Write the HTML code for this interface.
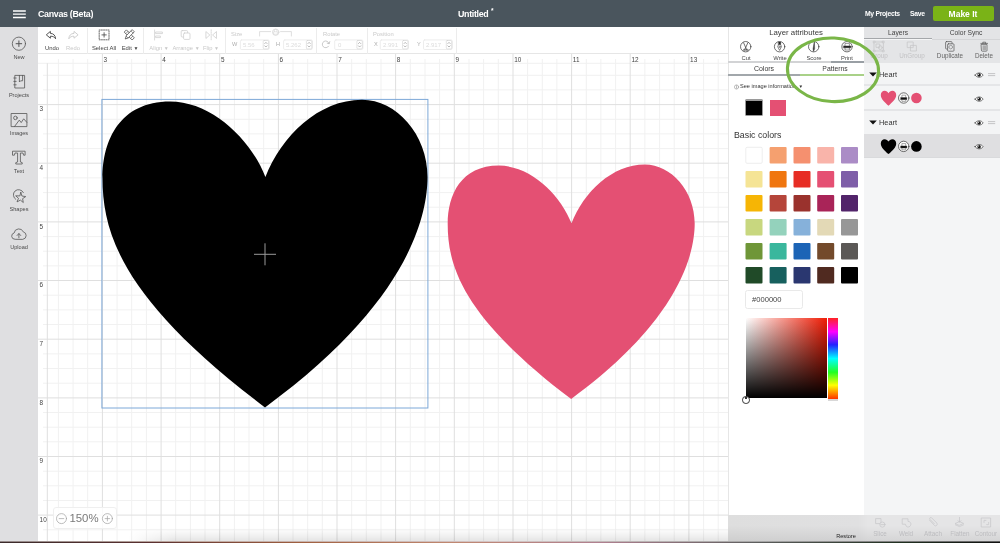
<!DOCTYPE html>
<html>
<head>
<meta charset="utf-8">
<title>Canvas</title>
<style>
*{box-sizing:border-box;margin:0;padding:0}
html,body{width:1000px;height:543px;overflow:hidden;background:#fff;font-family:"Liberation Sans",sans-serif;}
#app{position:relative;width:1000px;height:543px;overflow:hidden;background:#fff}
.abs{position:absolute}
.t{will-change:transform;position:absolute;white-space:nowrap;line-height:1;transform:translate(-50%,-50%)}
.tl{will-change:transform;position:absolute;white-space:nowrap;line-height:1;transform:translate(0,-50%)}
#header{position:absolute;left:0;top:0;width:1000px;height:27px;background:#4a555d}
#sidebar{position:absolute;left:0;top:27px;width:38px;height:514px;background:#dfdfe1}
#toolbar{position:absolute;left:38px;top:27px;width:690px;height:27px;background:#fff;border-bottom:1px solid #e6e6e6}
#canvas{position:absolute;left:38px;top:54px;width:690px;height:487px;background:#fff}
#attr{position:absolute;left:728px;top:27px;width:136px;height:488px;background:#fff}
#layers{position:absolute;left:864px;top:27px;width:136px;height:488px;background:#f4f5f6}
#bottombar{position:absolute;left:728px;top:515px;width:272px;height:26px;background:linear-gradient(to bottom,rgba(0,0,0,0) 40%,rgba(0,0,0,0.07) 100%),linear-gradient(to right,#dedede 0,#e0e0e1 130px,#e5e5e6 140px)}
#strip{position:absolute;left:0;top:542px;width:1000px;height:1px;background:linear-gradient(90deg,#3a2a2a 0%,#5a3030 15%,#a06040 30%,#c08870 45%,#b08090 60%,#606060 75%,#203020 90%,#101010 100%)}
.sb{color:#4a4a4a;font-size:5.6px}
.tb{color:#444;font-size:5.9px}
.tbd{color:#c8c8c8;font-size:5.8px}
.rl{position:absolute;font-size:6.3px;color:#444;line-height:1}
</style>
</head>
<body>
<div id="app">

<!-- HEADER -->
<div id="header">
  <svg class="abs" style="left:0;top:0" width="38" height="27" viewBox="0 0 38 27"><path d="M13 10.9H25.8M13 14.1H25.8M13 17.4H25.8" stroke="#fff" stroke-width="1.45" fill="none"/></svg>
  <div class="tl" style="left:38.4px;top:13.8px;color:#fff;font-weight:bold;font-size:8.9px;letter-spacing:-0.32px">Canvas (Beta)</div>
  <div class="tl" style="left:458.4px;top:13.6px;color:#fff;font-weight:bold;font-size:8.9px;letter-spacing:-0.32px">Untitled</div>
  <div class="tl" style="left:490.8px;top:10.6px;color:#fff;font-weight:bold;font-size:6.5px">*</div>
  <div class="tl" style="left:864.5px;top:13.8px;color:#fff;font-weight:bold;font-size:6.8px;letter-spacing:-0.3px">My Projects</div>
  <div class="tl" style="left:910px;top:13.8px;color:#fff;font-weight:bold;font-size:6.8px;letter-spacing:-0.3px">Save</div>
  <div class="abs" style="left:932.5px;top:6.3px;width:61.5px;height:14.4px;background:#7ab317;border-radius:2px"></div>
  <div class="t" style="left:962.5px;top:13.6px;color:#fff;font-weight:bold;font-size:8.5px">Make It</div>
</div>

<!-- SIDEBAR -->
<div id="sidebar">
  <svg class="abs" style="left:0;top:0" width="38" height="300" viewBox="0 27 38 300" fill="none" stroke="#555" stroke-width="0.8" stroke-linecap="round" stroke-linejoin="round">
    <!-- New -->
    <circle cx="18.9" cy="43.7" r="6.6"/>
    <path d="M16.1 43.7H21.7M18.9 40.9V46.5" stroke-width="1"/>
    <!-- Projects -->
    <path d="M15.2 75.4H24.6V88H15.2Z"/>
    <path d="M19.4 75.4V82L20.6 80.8H22.6V75.4" />
    <path d="M13.8 78H16.2M13.8 81.4H16.2M13.8 84.8H16.2"/>
    <!-- Images -->
    <rect x="11.5" y="113.5" width="15.4" height="13.1"/>
    <circle cx="15.4" cy="117.9" r="1.8"/>
    <path d="M14.6 126.4L19.3 120.1L21.2 122.6L23.7 118.8L26.8 122.3"/>
    <!-- Text -->
    <path d="M12.9 151.2H25.1V155.2H23.6L23 153H20.4V162L22.2 162.6V164H15.8V162.6L17.6 162V153H15L14.4 155.2H12.9Z"/>
    <!-- Shapes -->
    <path d="M15.8 199.4A5.3 5.3 0 1 1 23.4 192.6"/>
    <path d="M20.9 192.4L21.9 196L25.7 196.6L22.6 198.7L23.3 202.5L20.4 200.1L17 201.9L18.5 198.3L15.7 195.8L19.5 195.9Z"/>
    <!-- Upload -->
    <path d="M14.8 239.3A3.2 3.2 0 0 1 14.1 233A4.8 4.8 0 0 1 23.3 231.9A3.8 3.8 0 0 1 23.1 239.3Z"/>
    <path d="M18.9 237.8V233.8M17.1 235.5L18.9 233.5L20.7 235.5"/>
  </svg>
  <div class="t sb" style="left:18.8px;top:30.5px">New</div>
  <div class="t sb" style="left:18.8px;top:68.8px">Projects</div>
  <div class="t sb" style="left:18.8px;top:106.8px">Images</div>
  <div class="t sb" style="left:18.8px;top:144.8px">Text</div>
  <div class="t sb" style="left:18.8px;top:182.8px">Shapes</div>
  <div class="t sb" style="left:18.8px;top:220.8px">Upload</div>
</div>

<!-- TOOLBAR -->
<div id="toolbar">
  <!-- coords inside toolbar: x-38, y-27 -->
  <svg class="abs" style="left:0;top:0" width="690" height="27" viewBox="38 27 690 27" fill="none" stroke-linecap="round" stroke-linejoin="round">
    <g stroke="#ececec" stroke-width="1" shape-rendering="crispEdges">
      <path d="M87.5 28V54M143.5 28V54M225.5 28V54M316.5 28V54M367.5 28V54M456.5 28V54"/>
    </g>
    <!-- undo -->
    <g stroke="#444" stroke-width="0.9">
      <path d="M46.6 34.6L50.4 31.4V33.4C53.6 33.4 55.4 35.6 55.6 38.8C54.4 37 53 36.2 50.4 36.2V37.8Z"/>
    </g>
    <!-- redo -->
    <g stroke="#c9c9c9" stroke-width="0.9">
      <path d="M77.8 34.6L74 31.4V33.4C70.8 33.4 69 35.6 68.8 38.8C70 37 71.4 36.2 74 36.2V37.8Z"/>
    </g>
    <!-- select all -->
    <g stroke="#444" stroke-width="0.8">
      <rect x="99.2" y="30" width="9.8" height="9.8" stroke-dasharray="1 1.18"/>
      <path d="M101.9 34.9H106.3M104.1 32.7V37.1"/>
    </g>
    <!-- edit -->
    <g stroke="#444" stroke-width="0.7" transform="translate(129.4 34.8)">
      <g transform="rotate(-45)"><rect x="-1.35" y="-5.6" width="2.7" height="11.2" fill="#fff"/><path d="M-1.35 -3.4H1.35M-1.35 3.4H1.35" stroke-width="0.5"/></g>
      <g transform="rotate(45)"><path d="M-1.35 -5.6H1.35V3.2L0 5.9L-1.35 3.2Z" fill="#fff"/><path d="M-1.35 -3.8H1.35M-1.35 3.2H1.35" stroke-width="0.5"/></g>
    </g>
    <!-- align -->
    <g stroke="#cfcfcf" stroke-width="0.8">
      <path d="M154.6 30V40M156 32H162.4V33.6H156ZM156 36H160.4V37.6H156Z"/>
    </g>
    <!-- arrange -->
    <g stroke="#cfcfcf" stroke-width="0.8">
      <rect x="181.2" y="30.6" width="6.4" height="6.4" rx="1"/>
      <rect x="183.6" y="33" width="6.4" height="6.4" rx="1" fill="#fff"/>
    </g>
    <!-- flip -->
    <g stroke="#cfcfcf" stroke-width="0.8">
      <path d="M211.2 29.8V40.2" stroke-dasharray="1.2 1"/>
      <path d="M206.2 31.8L209.8 35L206.2 38.2ZM216.2 31.8L212.6 35L216.2 38.2Z"/>
    </g>
    <!-- size lock bracket -->
    <g stroke="#d6d6d6" stroke-width="0.8">
      <path d="M259.6 36V31.6H270.6M280.6 31.6H291.4V36"/>
      <circle cx="275.7" cy="32.2" r="3.2"/>
      <path d="M274.5 31.6V30.6A1.2 1.2 0 0 1 276.9 30.6V31.6M274 31.8H277.4V34.2H274Z" stroke-width="0.6"/>
    </g>
    <!-- inputs -->
    <g stroke="#e8e8e8" stroke-width="0.8">
      <rect x="240.4" y="39.9" width="28.8" height="9.6" rx="1.2"/>
      <rect x="283.6" y="39.9" width="28.8" height="9.6" rx="1.2"/>
      <rect x="334.7" y="39.9" width="28.2" height="9.6" rx="1.2"/>
      <rect x="380.3" y="39.9" width="28.2" height="9.6" rx="1.2"/>
      <rect x="423.5" y="39.9" width="28.8" height="9.6" rx="1.2"/>
    </g>
    <g stroke="#d2d2d2" stroke-width="0.6">
      <rect x="263.2" y="40.5" width="5.4" height="8.4" rx="1"/>
      <rect x="306.4" y="40.5" width="5.4" height="8.4" rx="1"/>
      <rect x="356.9" y="40.5" width="5.4" height="8.4" rx="1"/>
      <rect x="402.5" y="40.5" width="5.4" height="8.4" rx="1"/>
      <rect x="446.3" y="40.5" width="5.4" height="8.4" rx="1"/>
    </g>
    <g stroke="#8a8a8a" stroke-width="0.6">
      <path d="M264.7 43.6L265.9 42.4L267.1 43.6M264.7 45.8L265.9 47L267.1 45.8"/>
      <path d="M307.9 43.6L309.1 42.4L310.3 43.6M307.9 45.8L309.1 47L310.3 45.8"/>
      <path d="M358.4 43.6L359.6 42.4L360.8 43.6M358.4 45.8L359.6 47L360.8 45.8"/>
      <path d="M404 43.6L405.2 42.4L406.4 43.6M404 45.8L405.2 47L406.4 45.8"/>
      <path d="M447.8 43.6L449 42.4L450.2 43.6M447.8 45.8L449 47L450.2 45.8"/>
    </g>
    <!-- rotate icon -->
    <g stroke="#a8a8a8" stroke-width="0.6">
      <path d="M328.6 46.2A3.4 3.4 0 1 1 329 43.4"/>
      <path d="M329.8 41.6L329.2 43.8L327.2 43.2" />
    </g>
  </svg>
  <div class="t tb" style="left:13.8px;top:21.5px">Undo</div>
  <div class="t tbd" style="left:35px;top:21.5px">Redo</div>
  <div class="t tb" style="left:66px;top:21.5px">Select All</div>
  <div class="t tb" style="left:91.8px;top:21.5px">Edit <span style="font-size:5px">&#9660;</span></div>
  <div class="t tbd" style="left:120.6px;top:21.5px">Align <span style="font-size:5px">&#9660;</span></div>
  <div class="t tbd" style="left:147.5px;top:21.5px">Arrange <span style="font-size:5px">&#9660;</span></div>
  <div class="t tbd" style="left:173.4px;top:21.5px">Flip <span style="font-size:5px">&#9660;</span></div>
  <div class="tl tbd" style="left:192.8px;top:7.9px;color:#cacaca">Size</div>
  <div class="tl tbd" style="left:194px;top:18.3px;color:#adadad;font-size:5.6px">W</div>
  <div class="tl tbd" style="left:238px;top:18.3px;color:#adadad;font-size:5.6px">H</div>
  <div class="tl tbd" style="left:205px;top:18.3px;color:#dcdcdc;font-size:6px">5.56</div>
  <div class="tl tbd" style="left:248px;top:18.3px;color:#dcdcdc;font-size:6px">5.262</div>
  <div class="tl tbd" style="left:284.5px;top:7.9px;color:#cacaca">Rotate</div>
  <div class="tl tbd" style="left:300px;top:18.3px;color:#dcdcdc;font-size:6px">0</div>
  <div class="tl tbd" style="left:335px;top:7.9px;color:#cacaca">Position</div>
  <div class="tl tbd" style="left:336.4px;top:18.3px;color:#adadad;font-size:5.6px">X</div>
  <div class="tl tbd" style="left:345px;top:18.3px;color:#dcdcdc;font-size:6px">2.991</div>
  <div class="tl tbd" style="left:379px;top:18.3px;color:#adadad;font-size:5.6px">Y</div>
  <div class="tl tbd" style="left:388.4px;top:18.3px;color:#dcdcdc;font-size:6px">2.917</div>
</div>

<!-- CANVAS -->
<div id="canvas"></div>
<!--CANVAS-SVG-START-->
<svg class="abs" style="left:0;top:0" width="1000" height="543" viewBox="0 0 1000 543">
<defs><clipPath id="cc"><rect x="38" y="54" width="690" height="487"/></clipPath></defs>
<g clip-path="url(#cc)">
<path d="M58.4 59.0V541.0M73.1 59.0V541.0M87.7 59.0V541.0M117.1 59.0V541.0M131.7 59.0V541.0M146.4 59.0V541.0M175.7 59.0V541.0M190.4 59.0V541.0M205.0 59.0V541.0M234.4 59.0V541.0M249.0 59.0V541.0M263.7 59.0V541.0M293.0 59.0V541.0M307.7 59.0V541.0M322.3 59.0V541.0M351.7 59.0V541.0M366.3 59.0V541.0M381.0 59.0V541.0M410.3 59.0V541.0M425.0 59.0V541.0M439.6 59.0V541.0M469.0 59.0V541.0M483.6 59.0V541.0M498.3 59.0V541.0M527.6 59.0V541.0M542.3 59.0V541.0M556.9 59.0V541.0M586.3 59.0V541.0M600.9 59.0V541.0M615.6 59.0V541.0M644.9 59.0V541.0M659.6 59.0V541.0M674.2 59.0V541.0M703.6 59.0V541.0M718.2 59.0V541.0M43.0 75.3H728.0M43.0 89.9H728.0M43.0 119.3H728.0M43.0 133.9H728.0M43.0 148.6H728.0M43.0 177.9H728.0M43.0 192.6H728.0M43.0 207.2H728.0M43.0 236.6H728.0M43.0 251.2H728.0M43.0 265.9H728.0M43.0 295.2H728.0M43.0 309.9H728.0M43.0 324.5H728.0M43.0 353.9H728.0M43.0 368.5H728.0M43.0 383.2H728.0M43.0 412.5H728.0M43.0 427.2H728.0M43.0 441.8H728.0M43.0 471.2H728.0M43.0 485.8H728.0M43.0 500.5H728.0M43.0 529.8H728.0M38.0 63.3H728.0" stroke="#f1f1f1" stroke-width="1" fill="none"/>
<path d="M102.4 54.0V541.0M161.1 54.0V541.0M219.7 54.0V541.0M278.4 54.0V541.0M337.0 54.0V541.0M395.6 54.0V541.0M454.3 54.0V541.0M513.0 54.0V541.0M571.6 54.0V541.0M630.2 54.0V541.0M688.9 54.0V541.0M38.0 104.6H728.0M38.0 163.2H728.0M38.0 221.9H728.0M38.0 280.5H728.0M38.0 339.2H728.0M38.0 397.9H728.0M38.0 456.5H728.0M38.0 515.1H728.0M47.3 63.3V541.0" stroke="#dfdfdf" stroke-width="1" fill="none"/>
</g>
<g font-family="Liberation Sans, sans-serif" font-size="6.4" fill="#444">
<text x="103.6" y="61.9">3</text>
<text x="162.2" y="61.9">4</text>
<text x="220.9" y="61.9">5</text>
<text x="279.6" y="61.9">6</text>
<text x="338.2" y="61.9">7</text>
<text x="396.8" y="61.9">8</text>
<text x="455.5" y="61.9">9</text>
<text x="514.2" y="61.9">10</text>
<text x="572.8" y="61.9">11</text>
<text x="631.5" y="61.9">12</text>
<text x="690.1" y="61.9">13</text>
<text x="39.6" y="111.2">3</text>
<text x="39.6" y="169.8">4</text>
<text x="39.6" y="228.5">5</text>
<text x="39.6" y="287.1">6</text>
<text x="39.6" y="345.8">7</text>
<text x="39.6" y="404.5">8</text>
<text x="39.6" y="463.1">9</text>
<text x="39.6" y="521.8">10</text>
</g>
<rect x="101.9" y="99.4" width="326" height="308.6" fill="none" stroke="#7da8d8" stroke-width="1"/>
<path id="hp" d="M265.4 177.1 C251.3 140.1 212.3 101.4 170.0 101.4 C120 101.4 102.5 140 102.5 178.0 C102.5 235.6 124.5 301.4 265.0 407.4 C403.4 306.6 427.5 221.0 427.5 177.0 C427.5 134.5 396.4 99.8 362.0 99.8 C318.8 99.8 281.3 136.0 265.4 177.1Z" fill="#000"/>
<path d="M254 254.3H276M265 243.3V265.3" stroke="#9a9a9a" stroke-width="1" fill="none"/>
<path d="M265.4 177.1 C251.3 140.1 212.3 101.4 170.0 101.4 C120 101.4 102.5 140 102.5 178.0 C102.5 235.6 124.5 301.4 265.0 407.4 C403.4 306.6 427.5 221.0 427.5 177.0 C427.5 134.5 396.4 99.8 362.0 99.8 C318.8 99.8 281.3 136.0 265.4 177.1Z" fill="#e45073" transform="matrix(0.7600 0 0 0.7627 369.80 88.28)"/>
</svg>
<!--CANVAS-SVG-END-->
<!-- bottom fade -->
<div class="abs" style="left:128px;top:528px;width:600px;height:13px;background:linear-gradient(to bottom,rgba(0,0,0,0) 0%,rgba(0,0,0,0.035) 40%,rgba(0,0,0,0.1) 100%);-webkit-mask-image:linear-gradient(to right,rgba(0,0,0,0) 0,#000 45px);mask-image:linear-gradient(to right,rgba(0,0,0,0) 0,#000 45px)"></div>
<!-- zoom control -->
<div class="abs" style="left:52.5px;top:506.6px;width:64px;height:22px;border:1px solid #efefef;border-radius:3px;background:rgba(255,255,255,0.82)"></div>
<svg class="abs" style="left:50px;top:505px" width="70" height="26" viewBox="50 505 70 26" fill="none" stroke="#a0a0a0" stroke-width="0.7" stroke-linecap="round">
  <circle cx="61.5" cy="518.6" r="5"/><path d="M59.2 518.6H63.8"/>
  <circle cx="107.4" cy="518.6" r="5"/><path d="M105.1 518.6H109.7M107.4 516.3V520.9"/>
</svg>
<div class="t" style="left:84.2px;top:518.6px;font-size:11.4px;color:#7a7a7a">150%</div>


<!-- ATTR PANEL -->
<div id="attr">
  <div class="abs" style="left:0;top:0;width:1px;height:488px;background:#e6e6e6"></div>
  <!-- coords: x-728, y-27 -->
  <div class="t" style="left:68.4px;top:6px;font-size:7.8px;color:#3a3a3a">Layer attributes</div>
  <svg class="abs" style="left:0;top:0" width="136" height="100" viewBox="728 27 136 100" fill="none" stroke="#333" stroke-width="0.7" stroke-linecap="round" stroke-linejoin="round">
    <circle cx="745.7" cy="46.7" r="5.2"/>
    <circle cx="779.6" cy="46.7" r="5.2"/>
    <circle cx="813.7" cy="46.7" r="5.2"/>
    <circle cx="847" cy="46.7" r="5.2"/>
    <!-- cut: scissors-like blade -->
    <path d="M743.6 42.8L746.6 49.6M747.8 42.8L744.8 49.6"/>
    <circle cx="744.3" cy="50" r="0.9" stroke-width="0.5"/><circle cx="747.1" cy="50" r="0.9" stroke-width="0.5"/>
    <!-- write: pen -->
    <path d="M778.5 42H780.7V44.6H778.5Z" fill="#222" stroke-width="0.4"/>
    <path d="M778.5 44.8L777.7 46.6L779.6 50.4L781.5 46.6L780.7 44.8" stroke-width="0.6"/>
    <circle cx="779.6" cy="46.8" r="0.7" stroke-width="0.5"/>
    <!-- score: stylus -->
    <path d="M814.3 41.4L813.1 48.8L813.5 51.4L814.5 48.9Z" fill="#333" stroke-width="0.5"/>
    <!-- print: printer -->
    <path d="M845 45.6V43.4H849.4V45.6" stroke-width="0.5"/>
    <path d="M843.6 46H850.8V47.8H843.6Z" fill="#222" stroke-width="0.5"/>
    <path d="M845 47.8V50H849.4V47.8" stroke-width="0.5"/>
    <!-- info icon -->
    <circle cx="736.5" cy="87" r="2.1" stroke="#666" stroke-width="0.4"/>
    <path d="M736.5 86.6V88.2M736.5 85.7V85.8" stroke="#666" stroke-width="0.45"/>
  </svg>
  <div class="t" style="left:17.7px;top:32.2px;font-size:5.8px;color:#444">Cut</div>
  <div class="t" style="left:51.6px;top:32.2px;font-size:5.8px;color:#444">Write</div>
  <div class="t" style="left:85.7px;top:32.2px;font-size:5.8px;color:#444">Score</div>
  <div class="t" style="left:119px;top:32.2px;font-size:5.8px;color:#444">Print</div>
  <div class="abs" style="left:0;top:34.3px;width:136px;height:1.4px;background:#d2d3d5"></div>
  <div class="abs" style="left:103px;top:34.2px;width:33px;height:1.6px;background:#999fa4"></div>
  <div class="t" style="left:36px;top:41.4px;font-size:7px;color:#3a3a3a">Colors</div>
  <div class="t" style="left:106.5px;top:41.9px;font-size:6.8px;color:#3a3a3a">Patterns</div>
  <div class="abs" style="left:0;top:47.1px;width:72px;height:1.7px;background:#a2a7ab"></div>
  <div class="abs" style="left:72px;top:47.1px;width:64px;height:1.7px;background:#a9d188"></div>
  <div class="tl" style="left:12.2px;top:60px;font-size:5.6px;color:#333">See image information <span style="font-size:4.6px;margin-left:1px">&#9660;</span></div>
  <div class="abs" style="left:17px;top:72.4px;width:18px;height:17px;background:#9a9a9a;border-radius:1.5px;filter:blur(0.6px)"></div>
  <div class="abs" style="left:18.2px;top:73.6px;width:15.6px;height:14.6px;background:#000"></div>
  <div class="abs" style="left:42px;top:73.4px;width:16.4px;height:15.2px;background:#e45073"></div>
  <div class="tl" style="left:6.4px;top:107.6px;font-size:8.8px;color:#333">Basic colors</div>

  <svg class="abs" style="left:0;top:110px" width="136" height="160" viewBox="728 137 136 160">
    <rect x="745.8" y="147.3" width="16.4" height="16" rx="1.2" fill="#fff" stroke="#e6e6e6" stroke-width="0.7"/>
    <rect x="769.6" y="147.0" width="17" height="16.4" rx="1" fill="#f5a06f"/>
    <rect x="793.5" y="147.0" width="17" height="16.4" rx="1" fill="#f5906f"/>
    <rect x="817.2" y="147.0" width="17" height="16.4" rx="1" fill="#f9b4aa"/>
    <rect x="841.0" y="147.0" width="17" height="16.4" rx="1" fill="#ab8cc6"/>
    <rect x="745.5" y="171.1" width="17" height="16.4" rx="1" fill="#f5e495"/>
    <rect x="769.6" y="171.1" width="17" height="16.4" rx="1" fill="#f0760f"/>
    <rect x="793.5" y="171.1" width="17" height="16.4" rx="1" fill="#e72d24"/>
    <rect x="817.2" y="171.1" width="17" height="16.4" rx="1" fill="#e55073"/>
    <rect x="841.0" y="171.1" width="17" height="16.4" rx="1" fill="#7e5ea8"/>
    <rect x="745.5" y="195.0" width="17" height="16.4" rx="1" fill="#f6b505"/>
    <rect x="769.6" y="195.0" width="17" height="16.4" rx="1" fill="#b5453a"/>
    <rect x="793.5" y="195.0" width="17" height="16.4" rx="1" fill="#9a322d"/>
    <rect x="817.2" y="195.0" width="17" height="16.4" rx="1" fill="#a92458"/>
    <rect x="841.0" y="195.0" width="17" height="16.4" rx="1" fill="#52246a"/>
    <rect x="745.5" y="219.0" width="17" height="16.4" rx="1" fill="#c8d77f"/>
    <rect x="769.6" y="219.0" width="17" height="16.4" rx="1" fill="#94d2bc"/>
    <rect x="793.5" y="219.0" width="17" height="16.4" rx="1" fill="#86b1da"/>
    <rect x="817.2" y="219.0" width="17" height="16.4" rx="1" fill="#e3d9b6"/>
    <rect x="841.0" y="219.0" width="17" height="16.4" rx="1" fill="#979797"/>
    <rect x="745.5" y="243.1" width="17" height="16.4" rx="1" fill="#6f9638"/>
    <rect x="769.6" y="243.1" width="17" height="16.4" rx="1" fill="#3ab79d"/>
    <rect x="793.5" y="243.1" width="17" height="16.4" rx="1" fill="#1c64b6"/>
    <rect x="817.2" y="243.1" width="17" height="16.4" rx="1" fill="#734a2b"/>
    <rect x="841.0" y="243.1" width="17" height="16.4" rx="1" fill="#5b5856"/>
    <rect x="745.5" y="267.1" width="17" height="16.4" rx="1" fill="#204a28"/>
    <rect x="769.6" y="267.1" width="17" height="16.4" rx="1" fill="#17605e"/>
    <rect x="793.5" y="267.1" width="17" height="16.4" rx="1" fill="#2a3770"/>
    <rect x="817.2" y="267.1" width="17" height="16.4" rx="1" fill="#502a20"/>
    <rect x="841.0" y="267.1" width="17" height="16.4" rx="1" fill="#000000"/>
  </svg>
  <div class="abs" style="left:17px;top:262.8px;width:57.6px;height:18.8px;border:1px solid #e9e9e9;border-radius:2.5px;background:#fff"></div>
  <div class="tl" style="left:24.4px;top:272.8px;font-size:7.6px;color:#444">#000000</div>
  <!-- SV picker -->
  <div class="abs" style="left:18.1px;top:291.1px;width:80.6px;height:79.7px;background:linear-gradient(to top,#000 0%,rgba(0,0,0,0) 100%),linear-gradient(to right,#fff 0%,#f01c05 100%)"></div>
  <div class="abs" style="left:100px;top:291.1px;width:10.4px;height:80.6px;background:linear-gradient(to bottom,#f22 0%,#f0f 17%,#22f 33%,#0ff 50%,#2f2 67%,#ff0 83%,#f30 100%)"></div>
  <div class="abs" style="left:100px;top:371.7px;width:10.4px;height:2.4px;background:#d8d8d8"></div>
  <div class="abs" style="left:14.4px;top:369.2px;width:7.6px;height:7.6px;border-radius:50%;background:#fff;border:0.8px solid #333"></div>
  <div class="abs" style="left:17.4px;top:370.4px;width:1.4px;height:1.4px;background:#333"></div>
</div>

<!-- LAYERS PANEL -->
<div id="layers">
  <!-- coords: x-864, y-27 -->
  <div class="abs" style="left:0;top:0;width:136px;height:12px;background:#e3e4e6"></div>
  <div class="t" style="left:34px;top:5.8px;font-size:6.7px;color:#444">Layers</div>
  <div class="t" style="left:101.8px;top:5.8px;font-size:6.7px;color:#444">Color Sync</div>
  <div class="abs" style="left:0;top:11.3px;width:68.2px;height:1.2px;background:#a4a7aa"></div>
  <div class="abs" style="left:68.2px;top:11.5px;width:67.8px;height:1px;background:#d4d5d7"></div>
  <div class="abs" style="left:0;top:12.5px;width:136px;height:23px;background:#e4e5e7"></div>
  <div class="abs" style="left:0;top:35.5px;width:136px;height:23.5px;background:#f3f4f5"></div>
  <div class="abs" style="left:0;top:57.2px;width:136px;height:2.3px;background:#e5e6e8"></div>
  <div class="abs" style="left:0;top:60.4px;width:136px;height:22.4px;background:#f4f5f6"></div>
  <div class="abs" style="left:0;top:81.6px;width:136px;height:2.3px;background:#e4e5e7"></div>
  <div class="abs" style="left:0;top:84.4px;width:136px;height:22.4px;background:#f3f4f5"></div>
  <div class="abs" style="left:0;top:106.8px;width:136px;height:23.2px;background:#dfdfe1"></div>
  <div class="abs" style="left:0;top:129.6px;width:136px;height:1.2px;background:#d9dadc"></div>
  <svg class="abs" style="left:0;top:0" width="136" height="140" viewBox="864 27 136 140" fill="none" stroke-linecap="round" stroke-linejoin="round">
    <!-- group -->
    <g stroke="#c4c4c6" stroke-width="0.7">
      <rect x="874.4" y="42" width="9" height="9"/>
      <rect x="876.4" y="44" width="3.4" height="3.4"/><circle cx="880.4" cy="47.6" r="1.9"/>
      <rect x="873.6" y="41.2" width="1.6" height="1.6" fill="#e4e5e7"/><rect x="882.6" y="41.2" width="1.6" height="1.6" fill="#e4e5e7"/><rect x="873.6" y="50.2" width="1.6" height="1.6" fill="#e4e5e7"/><rect x="882.6" y="50.2" width="1.6" height="1.6" fill="#e4e5e7"/>
    </g>
    <!-- ungroup -->
    <g stroke="#c4c4c6" stroke-width="0.7">
      <rect x="907.6" y="42" width="5.6" height="5.6"/>
      <rect x="910.8" y="45.4" width="5.6" height="5.6"/>
    </g>
    <!-- duplicate -->
    <g stroke="#555" stroke-width="0.7">
      <rect x="945.6" y="41.6" width="6.4" height="7.4" rx="0.8"/>
      <rect x="947.6" y="43.8" width="6.4" height="7.4" rx="0.8" fill="#e4e5e7"/>
      <path d="M949.2 46.2L950.8 45.2L952.4 46.2V48L950.8 49L949.2 48Z" stroke-width="0.5"/>
    </g>
    <!-- delete -->
    <g stroke="#555" stroke-width="0.7">
      <path d="M980.8 43.4H987.6M982.8 43.4V42.2H985.6V43.4M981.4 44.4H987V50.4A0.8 0.8 0 0 1 986.2 51.2H982.2A0.8 0.8 0 0 1 981.4 50.4Z"/>
      <path d="M983.1 45.8V49.8M984.2 45.8V49.8M985.3 45.8V49.8" stroke-width="0.5"/>
    </g>
    <!-- row triangles -->
    <path d="M869.2 72.4H876.8L873 76.4Z" fill="#111" stroke="none"/>
    <path d="M869.2 120.6H876.8L873 124.6Z" fill="#111" stroke="none"/>
    <!-- eyes -->
    <g id="eye" stroke="#222" stroke-width="0.6">
      <path d="M975.1 75.1C976.8 72.2 981.4 72.2 983.1 75.1C981.4 78 976.8 78 975.1 75.1Z" fill="#fff"/>
      <circle cx="979.1" cy="75.1" r="1.75" fill="#1a1a1a" stroke="none"/>
      <circle cx="978.5" cy="74.5" r="0.5" fill="#fff" stroke="none"/>
    </g>
    <use href="#eye" y="24"/>
    <use href="#eye" y="47.8"/>
    <use href="#eye" y="71.6"/>
    <!-- drag handles -->
    <path d="M988.4 73.6H994.8M988.4 75.6H994.8M988.4 121.6H994.8M988.4 123.6H994.8" stroke="#b8b8ba" stroke-width="0.8"/>
    <!-- small hearts -->
    <defs><path id="sh" d="M888.5 93.2C887.7 91.8 886.4 90.8 884.7 90.8C882.4 90.8 880.8 92.6 880.8 95C880.8 98.8 884.6 102.2 888.5 105.7C892.4 102.2 896.2 98.8 896.2 95C896.2 92.6 894.6 90.8 892.3 90.8C890.6 90.8 889.3 91.8 888.5 93.2Z" stroke="none"/></defs>
    <use href="#sh" fill="#e45073"/>
    <use href="#sh" y="48.4" fill="#000"/>
    <!-- print circle icons -->
    <g id="pc">
      <circle cx="903.7" cy="98" r="5.2" fill="#fff" stroke="#333" stroke-width="0.7"/>
      <path d="M901.9 97.2V95.2H905.7V97.2" stroke="#555" stroke-width="0.5"/>
      <path d="M900.8 97.6H906.8V99.6H900.8Z" fill="#111" stroke="#111" stroke-width="0.4"/>
      <path d="M901.9 99.6V101.4H905.7V99.6" stroke="#555" stroke-width="0.5"/>
    </g>
    <use href="#pc" y="48.4"/>
    <circle cx="916.4" cy="98" r="5.3" fill="#e45073"/>
    <circle cx="916.4" cy="146.4" r="5.3" fill="#000"/>
  </svg>
  <div class="t tbd" style="left:15px;top:28.6px;font-size:6.3px;color:#c2c2c4">Group</div>
  <div class="t tbd" style="left:48px;top:28.6px;font-size:6.3px;color:#c2c2c4">UnGroup</div>
  <div class="t" style="left:86px;top:28.6px;font-size:6.3px;color:#646464">Duplicate</div>
  <div class="t" style="left:120.2px;top:28.6px;font-size:6.3px;color:#646464">Delete</div>
  <div class="tl" style="left:15.2px;top:47.6px;font-size:7.4px;color:#333">Heart</div>
  <div class="tl" style="left:14.8px;top:95.6px;font-size:7.4px;color:#333">Heart</div>
</div>

<!-- BOTTOM BAR -->
<div id="bottombar">
  <!-- coords: x-728, y-515 -->
  <svg class="abs" style="left:0;top:0" width="272" height="26" viewBox="728 515 272 26" fill="none" stroke="#c6c6c8" stroke-width="0.7" stroke-linecap="round" stroke-linejoin="round">
    <!-- slice -->
    <rect x="876" y="518.6" width="5" height="5"/><circle cx="882.4" cy="524.6" r="2.6" fill="#e4e4e5"/><path d="M880.8 524.6H884"/>
    <!-- weld -->
    <path d="M902.6 518.8H908V521.4A2.8 2.8 0 1 1 906.2 526.2L905.4 524.2H902.6Z"/>
    <!-- attach -->
    <path d="M929.6 520.2L934.4 525.4A1.7 1.7 0 0 0 936.8 523L931.4 517.6A1.2 1.2 0 0 0 929.8 519.2L934.4 523.8"/>
    <!-- flatten -->
    <path d="M959.5 517.4V522M958 520.6L959.5 522.2L961 520.6M955.4 523.4L959.5 521.6L963.6 523.4L959.5 525.2ZM955.4 524.8L959.5 526.6L963.6 524.8"/>
    <!-- contour -->
    <rect x="981.6" y="518" width="9" height="9"/><path d="M984 522.5V520.4H986M988.6 522.5V524.6H986.6" stroke-dasharray="0.8 0.8"/>
  </svg>
  <div class="t" style="left:117.6px;top:21.5px;font-size:5.6px;color:#222">Restore</div>
  <div class="t" style="left:152.3px;top:18.6px;font-size:6.3px;color:#bcbcbf">Slice</div>
  <div class="t" style="left:178.4px;top:18.6px;font-size:6.3px;color:#bcbcbf">Weld</div>
  <div class="t" style="left:205px;top:18.6px;font-size:6.3px;color:#bcbcbf">Attach</div>
  <div class="t" style="left:231.5px;top:18.6px;font-size:6.3px;color:#bcbcbf">Flatten</div>
  <div class="t" style="left:258px;top:18.6px;font-size:6.3px;color:#bcbcbf">Contour</div>
</div>
<div class="abs" style="left:0;top:541px;width:1000px;height:1px;background:linear-gradient(90deg,rgba(60,40,40,0.55) 0%,rgba(120,70,50,0.45) 20%,rgba(150,110,110,0.4) 50%,rgba(80,80,80,0.5) 76%,rgba(30,30,30,0.7) 100%)"></div>
<div id="strip"></div>

<!-- OVERLAY -->
<svg class="abs" style="left:0;top:0" width="1000" height="543" viewBox="0 0 1000 543">
  <ellipse cx="833" cy="69.8" rx="45.6" ry="31.8" fill="none" stroke="#7ab648" stroke-width="3.1" transform="rotate(2.5 833 69.8)"/>
</svg>

</div>
</body>
</html>
